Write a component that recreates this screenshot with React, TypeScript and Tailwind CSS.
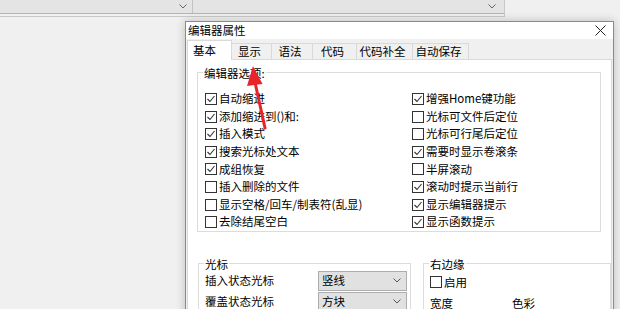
import React from "react";

const font = { fontFamily: '"Noto Sans CJK SC", "Noto Sans", sans-serif' };

type Opt = { label: string; checked: boolean };

const leftOpts: Opt[] = [
  { label: "自动缩进", checked: true },
  { label: "添加缩进到()和:", checked: true },
  { label: "插入模式", checked: true },
  { label: "搜索光标处文本", checked: true },
  { label: "成组恢复", checked: true },
  { label: "插入删除的文件", checked: false },
  { label: "显示空格/回车/制表符(乱显)", checked: false },
  { label: "去除结尾空白", checked: false },
];

const rightOpts: Opt[] = [
  { label: "增强Home键功能", checked: true },
  { label: "光标可文件后定位", checked: false },
  { label: "光标可行尾后定位", checked: false },
  { label: "需要时显示卷滚条", checked: true },
  { label: "半屏滚动", checked: false },
  { label: "滚动时提示当前行", checked: true },
  { label: "显示编辑器提示", checked: true },
  { label: "显示函数提示", checked: true },
];

const tabs = [
  { name: "基本", w: "w-[45px]" },
  { name: "显示", w: "w-[40px]" },
  { name: "语法", w: "w-[41px]" },
  { name: "代码", w: "w-[44px]" },
  { name: "代码补全", w: "w-[56px]" },
  { name: "自动保存", w: "w-[56px]" },
];

function Check({ checked }: { checked: boolean }) {
  return (
    <span className="flex h-[12px] w-[12px] shrink-0 items-center justify-center border border-[#333] bg-white">
      {checked && (
        <svg width="10" height="10" viewBox="0 0 10 10">
          <path d="M1.5 5 L4 7.5 L8.5 2" fill="none" stroke="#333" strokeWidth="1.1" />
        </svg>
      )}
    </span>
  );
}

function Row({ opt }: { opt: Opt }) {
  return (
    <div className="flex h-[17.6px] items-center gap-[2px]">
      <Check checked={opt.checked} />
      <span className="whitespace-nowrap text-[11.5px] leading-none">{opt.label}</span>
    </div>
  );
}

function Combo({ value }: { value: string }) {
  return (
    <div className="flex h-[20px] w-[89px] items-center justify-between border border-[#adadad] bg-[#e1e1e1] pl-[3px] pr-[5px] text-[11.5px]">
      <span>{value}</span>
      <svg width="8" height="5" viewBox="0 0 8 5">
        <path d="M0.5 0.5 L4 4 L7.5 0.5" fill="none" stroke="#555" strokeWidth="1" />
      </svg>
    </div>
  );
}

export default function App() {
  return (
    <div className="relative h-[309px] w-[620px] overflow-hidden bg-[#f0f0f0] text-black" style={font}>
      {/* background window strip */}
      <div className="h-[17px] w-[505px] border-b border-r border-[#c9c9c9]">
        <div className="flex h-[14px] border-b border-[#b5b5b5] bg-[#e4e4e4]">
          <div className="flex w-[193px] items-center justify-end border-r border-[#c2c2c2] pr-[5px]">
            <svg width="8" height="5" viewBox="0 0 8 5">
              <path d="M0.5 0.5 L4 4 L7.5 0.5" fill="none" stroke="#666" strokeWidth="1" />
            </svg>
          </div>
          <div className="flex flex-1 items-center justify-end pr-[8px]">
            <svg width="8" height="5" viewBox="0 0 8 5">
              <path d="M0.5 0.5 L4 4 L7.5 0.5" fill="none" stroke="#666" strokeWidth="1" />
            </svg>
          </div>
        </div>
      </div>

      {/* dialog window */}
      <div className="absolute left-[185px] top-[21px] flex h-[300px] w-[429px] flex-col border border-[#8a8a8a] bg-[#f0f0f0] shadow-[0_0_9px_rgba(0,0,0,0.22)]">
        <div className="flex h-[21px] items-center justify-between bg-white pl-[2px] pr-[7px] text-[11.5px]">
          <span>编辑器属性</span>
          <svg width="11" height="11" viewBox="0 0 11 11">
            <path d="M0.5 0.5 L10.5 10.5 M10.5 0.5 L0.5 10.5" stroke="#222" strokeWidth="1" />
          </svg>
        </div>

        <div className="mt-px flex h-[20px] items-end pl-px text-[11.5px]">
          {tabs.map((t, i) =>
            i === 0 ? (
              <div
                key={t.name}
                className={`${t.w} relative z-10 -mb-px flex h-[20px] items-center justify-center border border-b-0 border-[#d9d9d9] bg-white pr-[10px]`}
              >
                {t.name}
              </div>
            ) : (
              <div
                key={t.name}
                className={`${t.w} flex h-[16px] items-center justify-center border border-b-0 border-l-0 border-[#d9d9d9] bg-[#f0f0f0] pr-[4px]`}
              >
                {t.name}
              </div>
            ),
          )}
        </div>

        <div className="mx-px flex-1 border border-[#d9d9d9] bg-white">
          <div className="relative ml-[9px] mr-[10px] mt-[12px] h-[160px] border border-[#dcdcdc] pl-[7px] pt-[17px]">
            <span className="absolute left-[5px] top-[-6px] bg-white px-px text-[11.5px] leading-[12px]">编辑器选项:</span>
            <div className="grid grid-cols-[207px_1fr]">
              <div>
                {leftOpts.map((o) => (
                  <Row key={o.label} opt={o} />
                ))}
              </div>
              <div>
                {rightOpts.map((o) => (
                  <Row key={o.label} opt={o} />
                ))}
              </div>
            </div>
          </div>

          <div className="mt-[31px] flex pl-[10px]">
            <div className="relative h-[60px] w-[213px] border border-[#dcdcdc] pl-[6px] pt-[6px] text-[11.5px]">
              <span className="absolute left-[5px] top-[-6px] bg-white px-px leading-[12px]">光标</span>
              <div className="flex h-[21px] items-center">
                <span className="w-[113px]">插入状态光标</span>
                <Combo value="竖线" />
              </div>
              <div className="flex h-[21px] items-center">
                <span className="w-[113px]">覆盖状态光标</span>
                <Combo value="方块" />
              </div>
            </div>
            <div className="relative ml-[12px] h-[60px] w-[188px] border border-[#dcdcdc] pl-[6px] pt-[10px] text-[11.5px]">
              <span className="absolute left-[5px] top-[-6px] bg-white px-px leading-[12px]">右边缘</span>
              <div className="flex h-[16px] items-center gap-[2px]">
                <Check checked={false} />
                <span>启用</span>
              </div>
              <div className="mt-[5px] flex">
                <span className="w-[82px]">宽度</span>
                <span>色彩</span>
              </div>
            </div>
          </div>
        </div>
      </div>

      {/* red annotation arrow */}
      <svg className="pointer-events-none absolute left-0 top-0" width="620" height="309">
        <line x1="265" y1="128" x2="254.5" y2="80" stroke="#e8242a" strokeWidth="3" strokeLinecap="round" />
        <path d="M253 66 L262.5 84 L247 86 Z" fill="#e8242a" />
      </svg>
    </div>
  );
}
